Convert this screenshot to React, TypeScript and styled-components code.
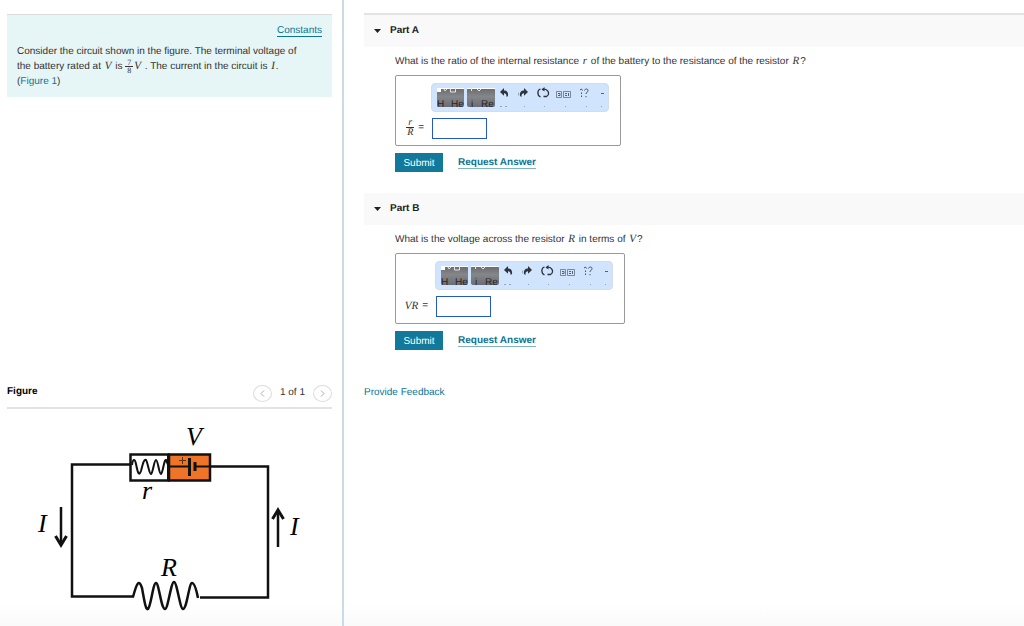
import React from 'react';
import styled, { createGlobalStyle } from 'styled-components';

const GlobalStyle = createGlobalStyle`
  * { box-sizing: border-box; }
  body {
    margin: 0;
    background: #fff;
    color: #333;
    font-family: "Liberation Sans", Arial, sans-serif;
    font-size: 10px;
    line-height: 15px;
    text-rendering: geometricPrecision;
  }
  a { color: #0b7594; text-decoration: none; }
  h2, h3, p { margin: 0; }
`;

const Page = styled.div`
  display: grid;
  grid-template-columns: 344px minmax(0, 1fr);
  min-height: 100vh;
  background: linear-gradient(to top, #fafafa, #fff 24px);
`;

const ProblemPane = styled.aside`
  display: flex;
  flex-direction: column;
  justify-content: space-between;
  padding: 14px 10px 0 7px;
  border-right: 2px solid #c9dae8;
`;

const Statement = styled.section`
  padding: 10px 10px 8px;
  background: #e6f5f6;
  border-top: 1px solid #dcdcdc;
`;

const ConstantsRow = styled.div`
  display: flex;
  justify-content: flex-end;
  margin-bottom: 7px;
`;

const ConstantsLink = styled.a`
  border-bottom: 1px solid #0b7594;
  line-height: 11px;
`;

const StatementText = styled.p`
  padding-right: 16px;
`;

const MathVar = styled.i`
  margin: 0 1px;
  font-family: "Liberation Serif", "Times New Roman", serif;
  font-size: 11px;
  line-height: 10px;
`;

const Fraction = styled.span<{ $size: number }>`
  display: inline-flex;
  flex-direction: column;
  align-items: center;
  vertical-align: middle;
  font-family: "Liberation Serif", "Times New Roman", serif;
  font-size: ${(p) => p.$size}px;
  line-height: ${(p) => p.$size - 1}px;
`;

const Numerator = styled.span`
  border-bottom: 1px solid #333;
  padding: 0 2px;
`;

const FigureSection = styled.section`
  display: flex;
  flex-direction: column;
`;

const FigureHeader = styled.header`
  display: flex;
  align-items: flex-start;
  justify-content: space-between;
  height: 25px;
  border-bottom: 2px solid #e3e3e3;
`;

const FigureTitle = styled.h2`
  color: #000;
  font-size: 10px;
  line-height: 15px;
`;

const Pager = styled.div`
  display: flex;
  align-items: center;
  gap: 8px;
  line-height: 18px;
`;

const PagerButton = styled.button`
  display: flex;
  align-items: center;
  justify-content: center;
  width: 19px;
  height: 17px;
  padding: 0;
  background: #fff;
  border: 1px solid #dcdcdc;
  border-radius: 50%;
`;

const Diagram = styled.svg`
  display: block;
  width: 325px;
  height: 217px;
  font-family: "Liberation Serif", "Times New Roman", serif;
  font-style: italic;
  font-size: 26px;
`;

const AnswerPane = styled.main`
  padding: 13px 0 0 20px;
`;

const PartHeader = styled.header<{ $first?: boolean }>`
  display: flex;
  align-items: center;
  gap: 9px;
  height: ${(p) => (p.$first ? 34 : 32)}px;
  padding-left: 10px;
  background: #f9f9f9;
  border-top: ${(p) => (p.$first ? '2px solid #e3e3e3' : '0')};
`;

const PartTitle = styled.h3`
  padding-bottom: 1px;
  color: #222;
  font-size: 10px;
`;

const PartBody = styled.div`
  padding: 7px 0 21px 31px;
`;

const AnswerBox = styled.div<{ $indent: number }>`
  display: grid;
  grid-template-columns: ${(p) => p.$indent}px auto;
  grid-template-rows: 29px 21px;
  row-gap: 6px;
  width: fit-content;
  margin-top: 6px;
  padding: 7px 11px 6px 0;
  border: 1px solid #999;
  border-radius: 2px;
`;

const Toolbar = styled.div`
  grid-column: 2;
  width: 178px;
  overflow: hidden;
  background: #d0e4fe;
  border: 1px solid #d5dce5;
  border-radius: 4px;
`;

const ToolbarArt = styled.svg`
  display: block;
  font-family: "Liberation Sans", Arial, sans-serif;
`;

const AnswerLabel = styled.label`
  display: flex;
  align-items: center;
  justify-content: flex-end;
  gap: 4px;
  padding: 0 7px 2px 0;

  ${MathVar} {
    margin: 0;
  }
`;

const AnswerInput = styled.input`
  width: 55px;
  height: 21px;
  margin-left: 1px;
  padding: 0 4px;
  background: #fff;
  border: 1px solid #2458c6;
  border-radius: 0;
  outline: 0;
`;

const Actions = styled.div`
  display: flex;
  align-items: center;
  gap: 15px;
  margin-top: 7px;
`;

const SubmitButton = styled.button`
  width: 48px;
  height: 19px;
  padding: 2px 0 0;
  background: #12799a;
  border: 0;
  color: #fff;
  font-family: inherit;
  font-size: 10px;
  text-rendering: inherit;
`;

const RequestLink = styled.a`
  border-bottom: 1px solid #7fb4c5;
  font-weight: 700;
  line-height: 11px;
`;

const Feedback = styled.a`
  display: inline-block;
  margin-top: 14px;
`;

function MathTools() {
  return (
    <Toolbar role="toolbar" aria-label="Math tools">
      <ToolbarArt width="176" height="27" viewBox="0 0 176 27" aria-hidden="true">
        <defs>
          <linearGradient id="key" x1="0" y1="0" x2="0" y2="1">
            <stop offset="0" stopColor="#696a6e" />
            <stop offset="0.45" stopColor="#85868a" />
            <stop offset="1" stopColor="#6c6d71" />
          </linearGradient>
          <clipPath id="keys"><rect x="4" y="4" width="58" height="19" /></clipPath>
        </defs>
        <rect x="5" y="4" width="27" height="19" rx="2" fill="url(#key)" />
        <rect x="35" y="4" width="28" height="19" rx="2" fill="url(#key)" />
        <path d="M5 4.500h27M35 4.500h28" stroke="#fff" />
        <path d="M12 5l1 2 2-2M18.500 4v4h5V4M39.500 4v3M45 5l2 2 2-2" fill="none" stroke="#e6e6e6" />
        <path d="M5 4h4v4H5z" fill="#fff" />
        <g clipPath="url(#keys)" fontSize="10" fill="#26272a">
          <text x="5" y="23">H</text><text x="19" y="23">He</text>
          <text x="39" y="23">i</text><text x="49" y="23">Re</text>
        </g>
        <g fill="#2d343c">
          <path d="M68 8l4-4v2.600c3 0 4.500 2 4 5.400l-1.500 1c.2-2.600-.7-3.800-2.500-3.800v2.600z" />
          <path d="M96 8l-4-4v2.600c-3 0-4.500 2-4 5.400l1.500 1c-.2-2.600.7-3.800 2.500-3.800v2.600z" />
        </g>
        <path d="M86.500 8.500v3" stroke="#9aabc0" />
        <path d="M108.500 5C105 6 105 11.500 108.500 13M110 5.500C115.500 3.500 119 10 114.500 12.500H111.500" fill="none" stroke="#2d343c" strokeWidth="1.300" />
        <path d="M109.500 5.500l3-2.500v4.500z" fill="#2d343c" />
        <g fill="none" stroke="#59636f">
          <path d="M124.500 7.500h5v6h-5zM131.500 7.500h7v6h-7z" strokeOpacity="0.7" />
          <path d="M126 9.500h2v2h-2M133 11.500h2M136.500 9v3M133 9.500h2" />
        </g>
        <path d="M148 6l1.500-1 1 1.500M149.500 8.500v1.500M149.500 11.500v1.500M152.500 6.500c.5-2 3.500-2 3.500 0 0 1.500-2 2-2 3.500M154 12v1.200" fill="none" stroke="#48515c" />
        <path d="M169 9.500h3" stroke="#59636f" />
        <path d="M68 22.500h2M73 22.500h2M92 22.500h1M112 22.500h1M133 22.500h1M154 22.500h1M169 22.500h1" stroke="#8da5c3" />
      </ToolbarArt>
    </Toolbar>
  );
}

interface PartProps {
  id: string;
  title: string;
  question: React.ReactNode;
  label: React.ReactNode;
  indent: number;
  first?: boolean;
}

function Part({ id, title, question, label, indent, first }: PartProps) {
  return (
    <section>
      <PartHeader $first={first}>
        <svg width="7" height="4" viewBox="0 0 7 4" aria-hidden="true">
          <path d="M0 0h7L3.500 4z" fill="#222" />
        </svg>
        <PartTitle>{title}</PartTitle>
      </PartHeader>
      <PartBody>
        <p>{question}</p>
        <AnswerBox $indent={indent}>
          <MathTools />
          <AnswerLabel htmlFor={id}>{label}<span>=</span></AnswerLabel>
          <AnswerInput id={id} type="text" />
        </AnswerBox>
        <Actions>
          <SubmitButton type="button">Submit</SubmitButton>
          <RequestLink href="#answer">Request Answer</RequestLink>
        </Actions>
      </PartBody>
    </section>
  );
}

function Circuit() {
  return (
    <Diagram viewBox="7 409 325 217" role="img" aria-label="Circuit diagram">
      <g fill="none" stroke="#111" strokeWidth="2.500">
        <path d="M130 464.500H72V596.500H134M211 466.500H268V597.500H200" />
        <path d="M133 597C137 582 139 579 142 588C145 605 146 610 148 609C151 606 153 583 156 583C159 583 161 609 165 609C168 609 171 582 174 582C177 582 180 609 183 609C187 609 189 583 192 583C194 583 196 588 198 598" />
        <path d="M61 507V544M278 547V511" />
        <path d="M55.500 536L61 545L66.500 536M272.500 519L278 510L283.500 519" strokeWidth="3" />
      </g>
      <rect x="130.500" y="454.500" width="38" height="26" fill="#fff" stroke="#111" strokeWidth="2.500" />
      <rect x="169" y="454.500" width="41" height="26" fill="#f07427" stroke="#111" strokeWidth="2.500" />
      <path d="M168.500 454V481" stroke="#111" strokeWidth="3" />
      <path d="M132 465C133 458 135 459 136 464C138 474 139 476 141 471C143 463 144 459 146 460C148 463 149 474 151 474C153 473 154 460 156 460C158 460 159 474 161 474C163 473 164 459 166 460L168 465" fill="none" stroke="#111" strokeWidth="2" />
      <path d="M170 466.500H190M195 466.500H210" stroke="#111" strokeWidth="2" />
      <path d="M189.500 458V476" stroke="#111" strokeWidth="3" />
      <path d="M195 462V471" stroke="#111" strokeWidth="3" />
      <path d="M179 460.500H186M182.500 457V464" stroke="#5b3215" strokeWidth="1" />
      <g fill="#000">
        <text x="186" y="445">V</text>
        <text x="142" y="499">r</text>
        <text x="38" y="532">I</text>
        <text x="290" y="535">I</text>
        <text x="161" y="576">R</text>
      </g>
    </Diagram>
  );
}

export default function App() {
  return (
    <>
      <GlobalStyle />
      <Page>
        <ProblemPane>
          <Statement>
            <ConstantsRow><ConstantsLink href="#constants">Constants</ConstantsLink></ConstantsRow>
            <StatementText>
              Consider the circuit shown in the figure. The terminal voltage of the battery rated at{' '}
              <MathVar>V</MathVar> is <Fraction $size={8}><Numerator>7</Numerator><span>8</span></Fraction>
              <MathVar>V</MathVar> . The current in the circuit is <MathVar>I</MathVar>.
              <br />(<a href="#figure">Figure 1</a>)
            </StatementText>
          </Statement>
          <FigureSection id="figure">
            <FigureHeader>
              <FigureTitle>Figure</FigureTitle>
              <Pager>
                <PagerButton type="button" aria-label="Previous figure">
                  <svg width="5" height="7" viewBox="0 0 5 7"><path d="M4 .5L1 3.500L4 6.500" fill="none" stroke="#aaa" /></svg>
                </PagerButton>
                <span>1 of 1</span>
                <PagerButton type="button" aria-label="Next figure">
                  <svg width="5" height="7" viewBox="0 0 5 7"><path d="M1 .5L4 3.500L1 6.500" fill="none" stroke="#aaa" /></svg>
                </PagerButton>
              </Pager>
            </FigureHeader>
            <Circuit />
          </FigureSection>
        </ProblemPane>
        <AnswerPane>
          <Part
            id="part-a"
            title="Part A"
            first
            indent={35}
            question={<>What is the ratio of the internal resistance <MathVar>r</MathVar> of the battery to the resistance of the resistor <MathVar>R</MathVar>?</>}
            label={<Fraction $size={10}><Numerator><i>r</i></Numerator><i>R</i></Fraction>}
          />
          <Part
            id="part-b"
            title="Part B"
            indent={39}
            question={<>What is the voltage across the resistor <MathVar>R</MathVar> in terms of <MathVar>V</MathVar>?</>}
            label={<MathVar>VR</MathVar>}
          />
          <Feedback href="#feedback">Provide Feedback</Feedback>
        </AnswerPane>
      </Page>
    </>
  );
}
